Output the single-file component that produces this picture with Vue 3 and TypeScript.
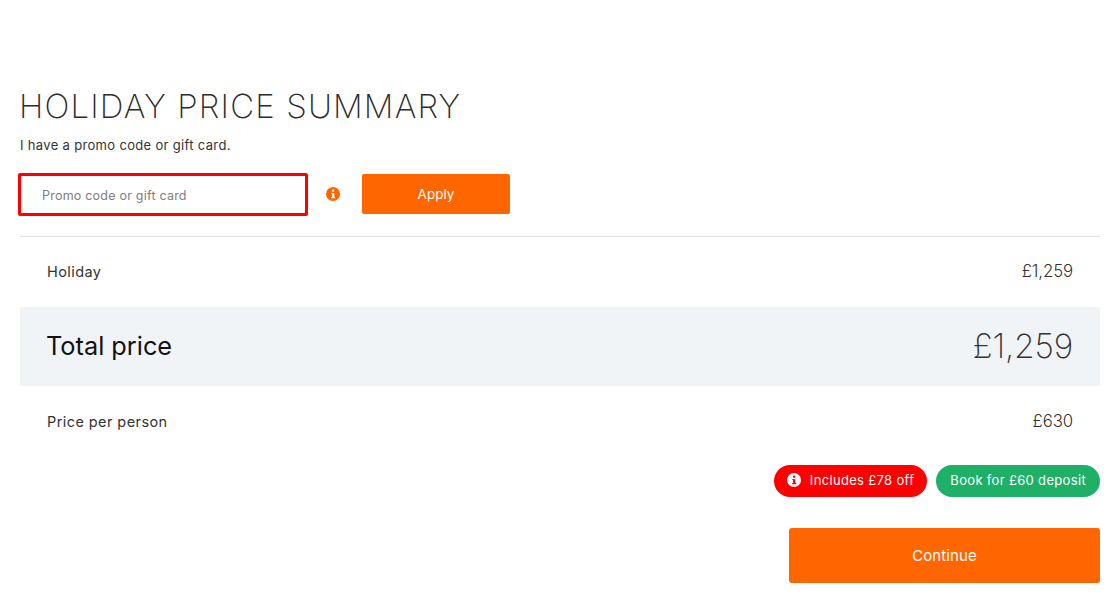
<script setup lang="ts">
const rows = { holiday: '£1,259', total: '£1,259', person: '£630' }
</script>

<template>
  <main class="page">
    <h1 class="title">HOLIDAY PRICE SUMMARY</h1>
    <p class="hint">I have a promo code or gift card.</p>
    <form class="promo" @submit.prevent>
      <input class="code" type="text" placeholder="Promo code or gift card" />
      <svg class="info" viewBox="0 0 14 14" width="14" height="14" aria-hidden="true">
        <circle cx="7" cy="7" r="7" fill="#ff6600" />
        <rect x="6" y="2.6" width="2.2" height="2.2" rx="0.5" fill="#fff" />
        <path d="M5.4 6h2.9v4h0.9v1.3H5.2V10h0.9V7.3h-.7z" fill="#fff" />
      </svg>
      <button class="apply" type="submit">Apply</button>
    </form>
    <section class="summary">
      <div class="row">
        <span class="label">Holiday</span>
        <span class="value">{{ rows.holiday }}</span>
      </div>
      <div class="row total">
        <span class="total-label">Total price</span>
        <span class="total-value">{{ rows.total }}</span>
      </div>
      <div class="row person">
        <span class="label">Price per person</span>
        <span class="value">{{ rows.person }}</span>
      </div>
    </section>
    <div class="badges">
      <span class="badge red">
        <svg viewBox="0 0 14 14" width="14" height="14" aria-hidden="true">
          <circle cx="7" cy="7" r="7" fill="#fff" />
          <rect x="6" y="2.6" width="2.2" height="2.2" rx="0.5" fill="#ff0000" />
          <path d="M5.4 6h2.9v4h0.9v1.3H5.2V10h0.9V7.3h-.7z" fill="#ff0000" />
        </svg>
        Includes £78 off
      </span>
      <span class="badge green">Book for £60 deposit</span>
    </div>
    <div class="actions">
      <button class="continue" type="button">Continue</button>
    </div>
  </main>
</template>

<style>
html, body { margin: 0; background: #fff; }
</style>

<style scoped>
.page {
  box-sizing: border-box;
  width: 1119px;
  height: 599px;
  padding: 87px 19px 0 20px;
  font-family: Inter, "Liberation Sans", sans-serif;
  color: #333;
  overflow: hidden;
}
.title {
  margin: 0 0 0 -1px;
  font-size: 33px;
  line-height: 38px;
  font-weight: 200;
  color: #2b2b2b;
  letter-spacing: 1.15px;
  white-space: nowrap;
}
.hint {
  margin: 12px 0 0;
  font-size: 13px;
  line-height: 16px;
  letter-spacing: 0.33px;
  color: #333;
}
.promo {
  display: flex;
  align-items: flex-start;
  margin-top: 20px;
  margin-left: -2px;
}
.code {
  box-sizing: border-box;
  width: 290px;
  height: 43px;
  border: 3px solid #ff0000;
  border-radius: 2px;
  padding: 1px 0 0 21px;
  font: 12.5px Inter, "Liberation Sans", sans-serif;
  letter-spacing: 0.22px;
  outline: none;
}
.code::placeholder { color: #808080; opacity: 1; }
.info { margin: 14px 0 0 18px; }
.apply {
  width: 148px;
  height: 40px;
  margin: 1px 0 0 22px;
  border: 0;
  border-radius: 2px;
  background: #ff6600;
  color: #fff;
  font: 13.5px Inter, "Liberation Sans", sans-serif;
  padding: 0;
}
.summary {
  margin-top: 20px;
  border-top: 1px solid #e2e2e2;
}
.row {
  display: flex;
  justify-content: space-between;
  align-items: center;
  box-sizing: border-box;
  padding: 0 27px 2px;
  height: 70px;
}
.label { font-size: 14.5px; letter-spacing: 0.42px; color: #333; }
.value { font-size: 16.8px; font-weight: 300; letter-spacing: -0.1px; color: #333; }
.total {
  height: 79px;
  background: #f1f4f6;
  border-radius: 2px;
}
.total-label { font-size: 25.3px; color: #111; font-weight: 400; margin-left: -1px; }
.total-value { font-size: 33.5px; font-weight: 200; letter-spacing: -0.2px; color: #333; }
.person { height: 70px; padding-bottom: 0; }
.badges {
  display: flex;
  justify-content: flex-end;
  gap: 9px;
  margin-top: 9px;
}
.badge {
  display: flex;
  align-items: center;
  gap: 9px;
  height: 32px;
  padding: 0 13px 2px;
  box-sizing: border-box;
  border-radius: 16px;
  color: #fff;
  font-size: 13px;
  letter-spacing: 0.33px;
}
.red { background: #ff0000; }
.green { background: #1fb067; padding: 0 14px 2px; }
.actions {
  display: flex;
  justify-content: flex-end;
  margin-top: 31px;
}
.continue {
  width: 311px;
  height: 55px;
  border: 0;
  border-radius: 3px;
  background: #ff6600;
  color: #fff;
  font: 15px Inter, "Liberation Sans", sans-serif;
  letter-spacing: 0.1px;
}
</style>
